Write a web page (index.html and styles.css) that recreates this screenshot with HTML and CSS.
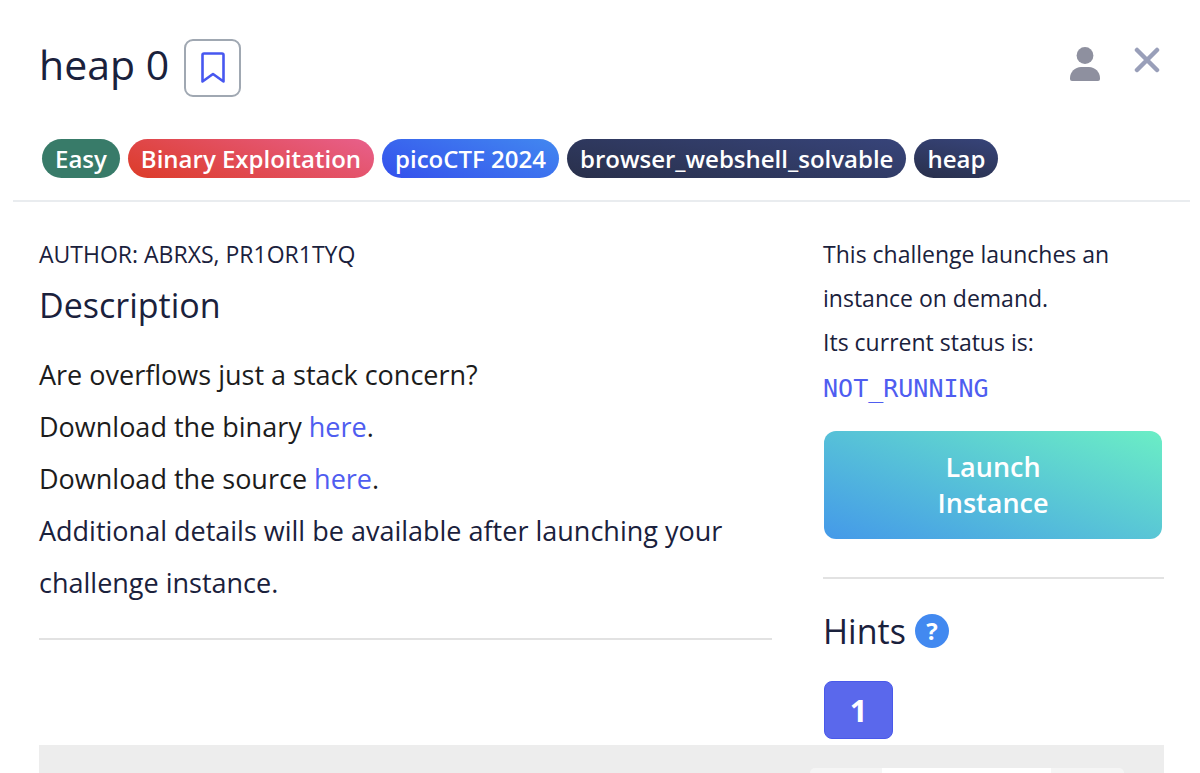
FILE: index.html
```
<!DOCTYPE html>
<html lang="en">
<head>
    <meta charset="UTF-8">
    <meta name="viewport" content="width=device-width, initial-scale=1.0">
    <title>heap 0 - picoCTF</title>
    <link rel="stylesheet" href="styles.css">
</head>
<body>

    <div class="modal">
        <!-- Header -->
        <header class="modal-header">
            <div class="title-row">
                <h1>heap 0</h1>
                <button class="bookmark" type="button" aria-label="Bookmark">
                    <svg width="24" height="32" viewBox="0 0 24 32" fill="none" stroke="#4757f0" stroke-width="2.600" stroke-linejoin="round">
                        <path d="M1.500 3Q1.500 1.500 3 1.500H21Q22.500 1.500 22.500 3V29.500L12 22L1.500 29.500Z"/>
                    </svg>
                </button>
                <div class="actions">
                    <button class="icon-button" type="button" aria-label="Author">
                        <svg width="30" height="34" viewBox="0 0 30 34" fill="#8e909f">
                            <circle cx="15" cy="8.500" r="8.400"/>
                            <path d="M11 20H19C25 20 30 25 30 31V32Q30 34 28 34H2Q0 34 0 32V31C0 25 5 20 11 20Z"/>
                        </svg>
                    </button>
                    <button class="icon-button" type="button" aria-label="Close">
                        <svg width="26" height="26" viewBox="0 0 26 26" fill="none" stroke="#999fb9" stroke-width="4.500" stroke-linecap="round">
                            <path d="M3 3L23 23M23 3L3 23"/>
                        </svg>
                    </button>
                </div>
            </div>
            <div class="tags">
                <span class="tag easy">Easy</span>
                <span class="tag category">Binary Exploitation</span>
                <span class="tag event">picoCTF 2024</span>
                <span class="tag">browser_webshell_solvable</span>
                <span class="tag">heap</span>
            </div>
        </header>

        <!-- Challenge body -->
        <main class="modal-body">
            <section class="details">
                <p class="author">AUTHOR: ABRXS, PR1OR1TYQ</p>
                <h2>Description</h2>
                <div class="description">
                    <p class="dark">Are overflows just a stack concern?</p>
                    <p class="dark">Download the binary <a href="#">here</a>.</p>
                    <p class="dark">Download the source <a href="#">here</a>.</p>
                    <p>Additional details will be available after launching your challenge instance.</p>
                </div>
                <hr>
            </section>

            <aside class="side">
                <p>This challenge launches an instance on demand.</p>
                <p>Its current status is:</p>
                <code>NOT_RUNNING</code>
                <button class="launch" type="button">Launch<br>Instance</button>
                <hr>
                <div class="hints-title">
                    <h2>Hints</h2>
                    <button class="help" type="button" aria-label="About hints">?</button>
                </div>
                <button class="hint" type="button">1</button>
            </aside>
        </main>

        <!-- Rating footer -->
        <footer class="rating">
            <div class="rating-box"></div>
        </footer>
    </div>

</body>
</html>
```

FILE: styles.css
```
* {
    box-sizing: border-box;
}

body {
    margin: 0;
    font-family: "Open Sans", "Noto Sans", sans-serif;
    color: #1a213c;
    background-color: #fff;
}

h1, h2, p {
    margin: 0;
    font-weight: 400;
}

button {
    font-family: inherit;
    cursor: pointer;
}

a {
    color: #4f5df0;
    text-decoration: none;
}

hr {
    margin: 0;
    border: none;
    height: 2px;
    background-color: #e2e2e2;
}

.modal-header {
    margin: 0 10px 0 13px;
    padding: 39px 26px 22px;
    border-bottom: 2px solid #e9ecef;
}

.title-row {
    display: flex;
    align-items: flex-start;
    gap: 15px;
}

h1 {
    font-size: 41px;
    line-height: 50px;
}

.bookmark {
    display: flex;
    align-items: center;
    justify-content: center;
    width: 57px;
    height: 58px;
    padding: 0;
    background-color: #fff;
    border: 2px solid #a0a8b2;
    border-radius: 9px;
}

.actions {
    display: flex;
    gap: 34px;
    margin: 8px 4px 0 auto;
}

.icon-button {
    display: flex;
    align-items: flex-start;
    padding: 0;
    background: none;
    border: none;
}

.tags {
    display: flex;
    flex-wrap: wrap;
    gap: 8px;
    padding: 42px 3px 0;
}

.tag {
    padding: 0 13px;
    font-size: 24px;
    font-weight: 600;
    line-height: 39px;
    color: #fff;
    border-radius: 20px;
    background: linear-gradient(10deg, #29304b, #37447a);
}

.tag.easy {
    background: #387b69;
}

.tag.category {
    background: linear-gradient(20deg, #dc3b28, #e8608c);
}

.tag.event {
    background: linear-gradient(20deg, #3450ec, #4288f0);
}

.modal-body {
    display: grid;
    grid-template-columns: 43fr 20fr;
    gap: 51px;
    padding: 30px 36px 6px 39px;
}

.author {
    font-size: 23px;
    line-height: 44px;
}

h2 {
    font-size: 34px;
    line-height: 58px;
}

.description {
    padding: 15px 0 29px;
    font-size: 27px;
    line-height: 52px;
}

.dark {
    color: #1c1c1c;
}

.side {
    font-size: 23px;
    line-height: 44px;
}

.side code {
    display: block;
    font-family: "DejaVu Sans Mono", monospace;
    font-size: 25px;
    line-height: 50px;
    color: #4f5df0;
}

.launch {
    display: block;
    width: calc(100% - 3px);
    margin: 17px 1px 38px;
    padding: 18px;
    font-size: 27px;
    font-weight: 600;
    line-height: 36px;
    color: #fff;
    border: none;
    border-radius: 12px;
    background: linear-gradient(20deg, #4499e9, #6beec5);
}

.hints-title {
    display: flex;
    align-items: center;
    gap: 9px;
    padding: 23px 0 21px;
}

.help {
    width: 34px;
    height: 34px;
    padding: 0;
    font-size: 24px;
    font-weight: 700;
    line-height: 34px;
    color: #fff;
    background-color: #4289f0;
    border: none;
    border-radius: 50%;
}

.hint {
    display: block;
    width: 69px;
    height: 58px;
    margin-left: 1px;
    padding: 0;
    font-size: 31px;
    font-weight: 700;
    color: #fff;
    background-color: #5a68ec;
    border: 1px solid #4959ea;
    border-radius: 8px;
}

.rating {
    display: flex;
    justify-content: flex-end;
    margin: 0 36px 0 39px;
    padding: 23px 40px 0;
    background-color: #ededed;
}

.rating-box {
    width: 314px;
    height: 5px;
    border-radius: 12px 12px 0 0;
    background: linear-gradient(90deg, #f5f5f5 72px, #fff 72px, #fff 241px, #f5f5f5 241px);
}
```
